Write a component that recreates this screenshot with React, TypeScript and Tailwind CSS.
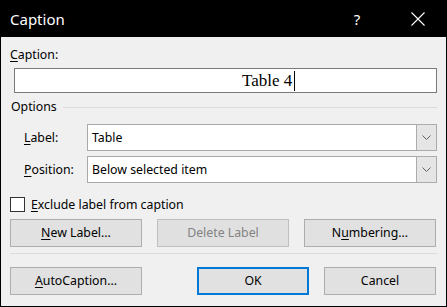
import React from "react";

const F = { fontFamily: '"Noto Sans", "Segoe UI", sans-serif' };

function U({ children }: { children: React.ReactNode }) {
  return <span className="underline underline-offset-2 decoration-1">{children}</span>;
}

function Btn({
  children,
  disabled,
  primary,
  w,
}: {
  children: React.ReactNode;
  disabled?: boolean;
  primary?: boolean;
  w: string;
}) {
  const base = "h-[28px] flex items-center justify-center text-[12.3px] leading-[16px]";
  if (primary)
    return <div className={`${base} ${w} bg-[#e1e1e1] border-2 border-[#0078d7] text-[#000]`}>{children}</div>;
  if (disabled)
    return <div className={`${base} ${w} bg-[#e0e0e0] border border-[#bfbfbf] text-[#838383]`}>{children}</div>;
  return <div className={`${base} ${w} bg-[#e1e1e1] border border-[#adadad] text-[#000]`}>{children}</div>;
}

function Select({ value }: { value: string }) {
  return (
    <div className="flex-1 h-[27px] flex bg-white border border-[#a9a9a9]">
      <div className="flex-1 flex items-center pl-[4px] text-[12.3px] leading-[16px] text-black">{value}</div>
      <div className="w-[21px] -my-[1px] -mr-[1px] bg-[#e5e5e5] border border-[#acacac] flex items-center justify-center">
        <svg width="9" height="5" viewBox="0 0 9 5">
          <path d="M0.5 0.5 L4.5 4.5 L8.5 0.5" fill="none" stroke="#606060" strokeWidth="1" />
        </svg>
      </div>
    </div>
  );
}

export default function App() {
  return (
    <div className="w-[447px] h-[307px] flex flex-col bg-black select-none" style={F}>
      <div className="h-[37px] flex items-center shrink-0">
        <div className="pl-[10px] text-[15px] leading-[20px] text-white flex-1">Caption</div>
        <div className="w-[20px] text-[15px] leading-[20px] text-white mr-[44px] text-center">?</div>
        <div className="mr-[22px] flex items-center">
          <svg width="14" height="14" viewBox="0 0 14 14">
            <path d="M0.5 0.5 L13.5 13.5 M13.5 0.5 L0.5 13.5" stroke="#fff" strokeWidth="1.1" />
          </svg>
        </div>
      </div>
      <div className="flex-1 mx-[1px] mb-[1px] bg-[#f0f0f0] px-[9px] flex flex-col">
        <div className="mt-[10px] h-[16px] text-[12.3px] leading-[16px] text-black">
          <U>C</U>aption:
        </div>
        <div className="mt-[5px] ml-[4px] mr-[0px] h-[25px] bg-white border border-[#7a7a7a] flex items-center pl-[227px]">
          <span className="text-[17px] leading-[20px] text-black" style={{ fontFamily: '"Liberation Serif", serif' }}>
            Table 4
          </span>
          <span className="w-[1px] h-[20px] bg-black ml-[2px]" />
        </div>
        <div className="mt-[6px] h-[16px] flex items-center">
          <span className="text-[12.3px] leading-[16px] text-black pl-[1px]">Options</span>
          <div className="flex-1 h-[1px] bg-[#dcdcdc] ml-[6px]" />
        </div>
        <div className="mt-[9px] flex items-center pl-[14px]">
          <div className="w-[63px] text-[12.3px] leading-[16px] text-black">
            <U>L</U>abel:
          </div>
          <Select value="Table" />
        </div>
        <div className="mt-[5px] flex items-center pl-[14px]">
          <div className="w-[63px] text-[12.3px] leading-[16px] text-black">
            <U>P</U>osition:
          </div>
          <Select value="Below selected item" />
        </div>
        <div className="mt-[14px] h-[15px] flex items-center">
          <div className="w-[15px] h-[15px] bg-white border border-[#333]" />
          <div className="ml-[6px] text-[12.3px] leading-[16px] text-black">
            <U>E</U>xclude label from caption
          </div>
        </div>
        <div className="mt-[7px] flex gap-[15px]">
          <Btn w="w-[132px]">
            <span>
              <U>N</U>ew Label...
            </span>
          </Btn>
          <Btn w="w-[132px]" disabled>
            Delete Label
          </Btn>
          <Btn w="w-[132px]">
            <span>
              N<U>u</U>mbering...
            </span>
          </Btn>
        </div>
        <div className="mt-[6px] h-[1px] bg-[#dcdcdc]" />
        <div className="mt-[13px] flex">
          <Btn w="w-[132px]">
            <span>
              <U>A</U>utoCaption...
            </span>
          </Btn>
          <div className="ml-[55px]">
            <Btn w="w-[112px]" primary>
              OK
            </Btn>
          </div>
          <div className="ml-[15px]">
            <Btn w="w-[112px]">Cancel</Btn>
          </div>
        </div>
      </div>
    </div>
  );
}
